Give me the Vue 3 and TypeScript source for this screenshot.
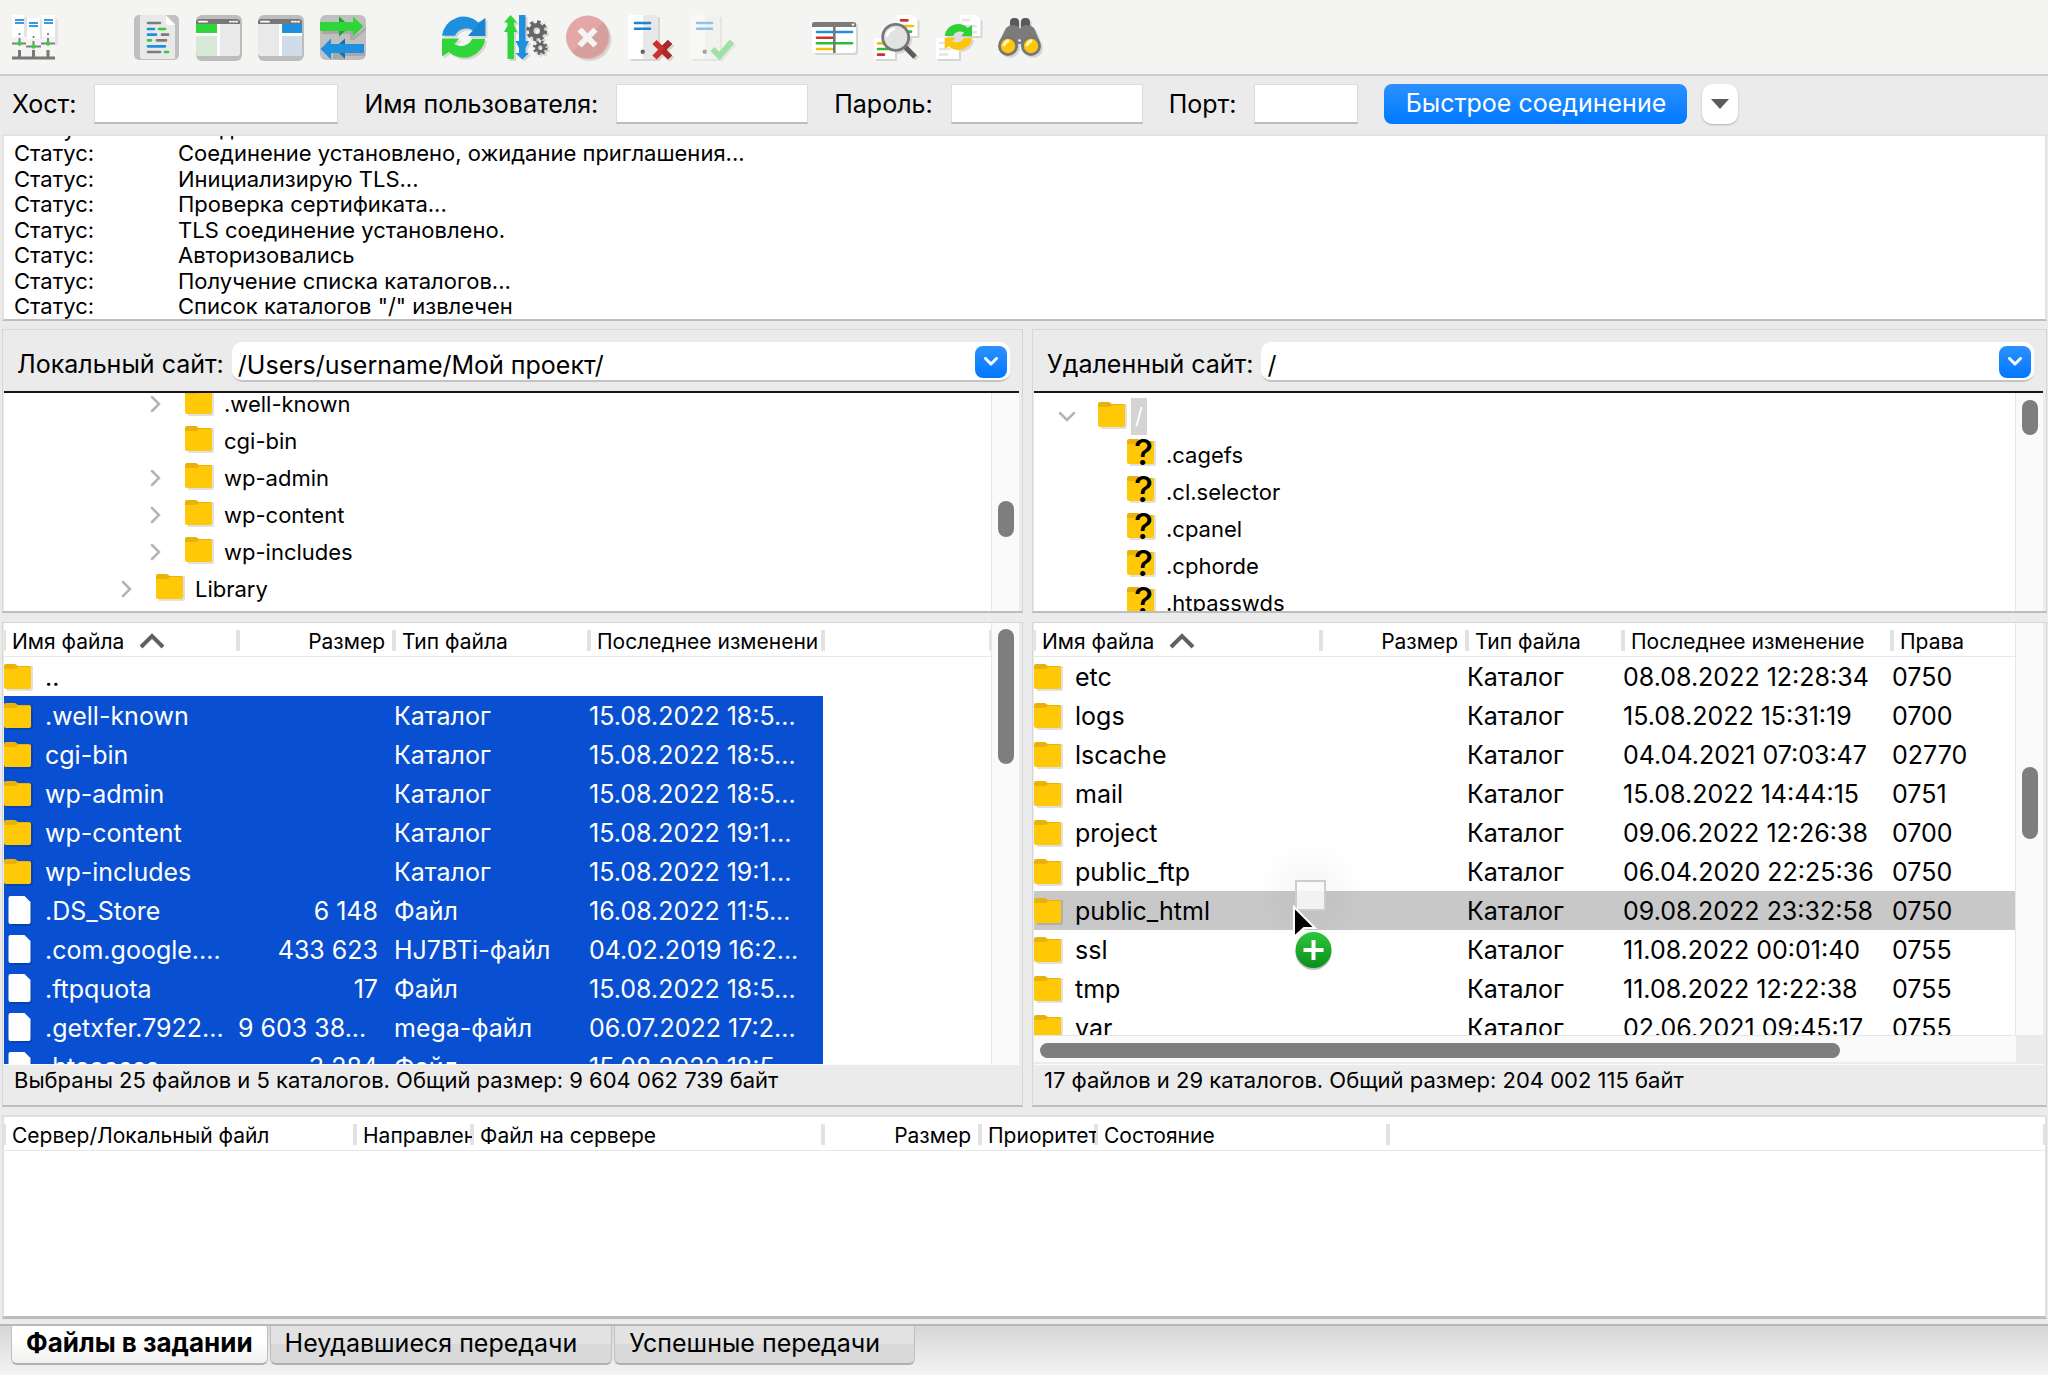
<script setup lang="ts">
interface FileRow {
  icon: 'folder' | 'file'
  name: string
  size: string
  type: string
  date: string
  rights?: string
  elided?: boolean
  state?: 'selected' | 'target'
}

interface TreeRow {
  name: string
  level: number
  arrow: 'right' | 'down' | 'none'
  unknown?: boolean
  current?: boolean
}

const log: string[] = [
  'Соединяюсь с 185.104.45.120:21...',
  'Соединение установлено, ожидание приглашения...',
  'Инициализирую TLS...',
  'Проверка сертификата...',
  'TLS соединение установлено.',
  'Авторизовались',
  'Получение списка каталогов...',
  'Список каталогов "/" извлечен',
]

const localTree: TreeRow[] = [
  { name: '.well-known', level: 2, arrow: 'right' },
  { name: 'cgi-bin', level: 2, arrow: 'none' },
  { name: 'wp-admin', level: 2, arrow: 'right' },
  { name: 'wp-content', level: 2, arrow: 'right' },
  { name: 'wp-includes', level: 2, arrow: 'right' },
  { name: 'Library', level: 1, arrow: 'right' },
]

const remoteTree: TreeRow[] = [
  { name: '/', level: 0, arrow: 'down', current: true },
  { name: '.cagefs', level: 1, arrow: 'none', unknown: true },
  { name: '.cl.selector', level: 1, arrow: 'none', unknown: true },
  { name: '.cpanel', level: 1, arrow: 'none', unknown: true },
  { name: '.cphorde', level: 1, arrow: 'none', unknown: true },
  { name: '.htpasswds', level: 1, arrow: 'none', unknown: true },
]

const localFiles: FileRow[] = [
  { icon: 'folder', name: '..', size: '', type: '', date: '' },
  { icon: 'folder', name: '.well-known', size: '', type: 'Каталог', date: '15.08.2022 18:5...', state: 'selected' },
  { icon: 'folder', name: 'cgi-bin', size: '', type: 'Каталог', date: '15.08.2022 18:5...', state: 'selected' },
  { icon: 'folder', name: 'wp-admin', size: '', type: 'Каталог', date: '15.08.2022 18:5...', state: 'selected' },
  { icon: 'folder', name: 'wp-content', size: '', type: 'Каталог', date: '15.08.2022 19:1...', state: 'selected' },
  { icon: 'folder', name: 'wp-includes', size: '', type: 'Каталог', date: '15.08.2022 19:1...', state: 'selected' },
  { icon: 'file', name: '.DS_Store', size: '6 148', type: 'Файл', date: '16.08.2022 11:5...', state: 'selected' },
  { icon: 'file', name: '.com.google....', size: '433 623', type: 'HJ7BTi-файл', date: '04.02.2019 16:2...', state: 'selected' },
  { icon: 'file', name: '.ftpquota', size: '17', type: 'Файл', date: '15.08.2022 18:5...', state: 'selected' },
  { icon: 'file', name: '.getxfer.7922...', size: '9 603 38...', elided: true, type: 'mega-файл', date: '06.07.2022 17:2...', state: 'selected' },
  { icon: 'file', name: '.htaccess', size: '3 284', type: 'Файл', date: '15.08.2022 18:5...', state: 'selected' },
]

const remoteFiles: FileRow[] = [
  { icon: 'folder', name: 'etc', size: '', type: 'Каталог', date: '08.08.2022 12:28:34', rights: '0750' },
  { icon: 'folder', name: 'logs', size: '', type: 'Каталог', date: '15.08.2022 15:31:19', rights: '0700' },
  { icon: 'folder', name: 'lscache', size: '', type: 'Каталог', date: '04.04.2021 07:03:47', rights: '02770' },
  { icon: 'folder', name: 'mail', size: '', type: 'Каталог', date: '15.08.2022 14:44:15', rights: '0751' },
  { icon: 'folder', name: 'project', size: '', type: 'Каталог', date: '09.06.2022 12:26:38', rights: '0700' },
  { icon: 'folder', name: 'public_ftp', size: '', type: 'Каталог', date: '06.04.2020 22:25:36', rights: '0750' },
  { icon: 'folder', name: 'public_html', size: '', type: 'Каталог', date: '09.08.2022 23:32:58', rights: '0750', state: 'target' },
  { icon: 'folder', name: 'ssl', size: '', type: 'Каталог', date: '11.08.2022 00:01:40', rights: '0755' },
  { icon: 'folder', name: 'tmp', size: '', type: 'Каталог', date: '11.08.2022 12:22:38', rights: '0755' },
  { icon: 'folder', name: 'var', size: '', type: 'Каталог', date: '02.06.2021 09:45:17', rights: '0755' },
]

// Scrollbar geometry: space before the thumb, thumb length, space after it.
type Span = [number, number, number]
const rows = (s: Span) => ({ gridTemplateRows: s.map((n) => `${n}fr`).join(' ') })
const cols = (s: Span) => ({ gridTemplateColumns: s.map((n) => `${n}fr`).join(' ') })
</script>

<template>
  <div class="app">
    <svg class="defs" aria-hidden="true">
      <symbol id="folder" viewBox="0 0 29 28">
        <path d="M2 3h26a1 1 0 0 1 1 1v22a2 2 0 0 1-2 2H3z" fill="#000" opacity=".12" />
        <path d="M0 3a2 2 0 0 1 2-2h9l3 2h11a2 2 0 0 1 2 2v4H0z" fill="#e9b20b" />
        <path d="M0 6h11q2 0 3-2h11a2 2 0 0 1 2 1v19a2 2 0 0 1-2 2H2a2 2 0 0 1-2-2z" fill="#ffc907" />
      </symbol>
      <symbol id="file" viewBox="0 0 28 30">
        <path d="M6 1h15l6 7v21a1 1 0 0 1-1 1H6z" fill="#000" opacity=".15" />
        <path d="M6 0h14l6 6v20a2 2 0 0 1-2 2H6a2 2 0 0 1-2-2V2a2 2 0 0 1 2-2z" fill="#fff" />
      </symbol>
      <symbol id="arcs" viewBox="0 0 48 48">
        <path d="M0 20.700A21.800 21.800 0 0 1 36.500 7.500L43.300 3v18H26l5-5.600A12.500 12.500 0 0 0 13 20.700z" />
      </symbol>
    </svg>

    <header class="toolbar">
      <div class="tools">
        <button class="tool" aria-label="Менеджер сайтов">
          <svg viewBox="0 0 48 48">
            <g fill="#fff"><path d="M0 0h12v22H0zM30 0h13v22H30zM15 3h13v21H15z" /></g>
            <path d="M12 2h3v20h-3zM28 4h2v20h-2zM43 4h3v26h-3z" fill="#e4e4e4" />
            <g stroke="#3a9ade" stroke-width="2"><path d="M3 5h9M3 8h9M17 8h9M17 11h9M32 5h9M32 8h9" /></g>
            <g fill="#666"><circle cx="7.500" cy="19" r="1" /><circle cx="21.500" cy="22" r="1" /><circle cx="36" cy="19" r="1" /></g>
            <g stroke="#808080" stroke-width="2"><path d="M0 28.500h14M14 31.500h15M29 28.500h14M7.500 23v6M21.500 26v6M36 23v6" /></g>
            <g stroke="#777" stroke-width="3"><path d="M0 43h43M7.500 35v7M21.500 35v7M36 35v7" /></g>
            <g fill="#30d53a"><circle cx="7.500" cy="28.500" r="2.200" /><circle cx="21.500" cy="31.500" r="2.200" /><circle cx="36" cy="28.500" r="2.200" /></g>
          </svg>
        </button>
      </div>
      <div class="tools">
        <button class="tool" aria-label="Журнал сообщений">
          <svg viewBox="0 0 48 48">
            <rect width="45" height="45" rx="5" fill="#c0c0c0" />
            <path d="M8 0h24l9 9v33a2 2 0 0 1-2 2H8a2 2 0 0 1-2-2V2a2 2 0 0 1 2-2z" fill="#e9e9e9" />
            <path d="M32 1l9 9h-7a2 2 0 0 1-2-2z" fill="#fff" />
            <g stroke-width="2.700" stroke-linecap="round">
              <path d="M14 8h12M28 19.700h6M23 25.300h9M14 37h12" stroke="#7c7c7c" />
              <path d="M14 14h6M14 19.700h8M14 31.300h17" stroke="#1f90de" />
              <path d="M25 14h6M14 25.300h3M31 37h3" stroke="#2ed038" />
            </g>
          </svg>
        </button>
        <button class="tool" aria-label="Локальное дерево">
          <svg viewBox="0 0 48 48">
            <rect width="46" height="46" rx="6" fill="#bdbdbd" />
            <path d="M0 9h44v29a3 3 0 0 1-3 3H3a3 3 0 0 1-3-3z" fill="#e9e9e9" />
            <path d="M0 9V7q0-3 4-3h36q4 0 4 3v2z" fill="#777" />
            <path d="M3 6.700h8M34 6.700h1M37 6.700h1M40 6.700h1" stroke="#fff" stroke-width="1.800" stroke-linecap="round" />
            <path d="M0 9h21v9H0z" fill="#30d53a" />
            <path d="M0 21h21v20H3a3 3 0 0 1-3-3z" fill="#d6e9d6" />
            <path d="M0 18h21V9h3v32h-3V21H0z" fill="#fff" />
          </svg>
        </button>
        <button class="tool" aria-label="Удаленное дерево">
          <svg viewBox="0 0 48 48">
            <rect width="46" height="46" rx="6" fill="#bdbdbd" />
            <path d="M0 9h44v29a3 3 0 0 1-3 3H3a3 3 0 0 1-3-3z" fill="#e9e9e9" />
            <path d="M0 9V7q0-3 4-3h36q4 0 4 3v2z" fill="#777" />
            <path d="M3 6.700h8M34 6.700h1M37 6.700h1M40 6.700h1" stroke="#fff" stroke-width="1.800" stroke-linecap="round" />
            <path d="M24 9h20v9H24z" fill="#1f90de" />
            <path d="M24 21h20v17a3 3 0 0 1-3 3H24z" fill="#d0dde8" />
            <path d="M44 18H24V9h-3v32h3V21h20z" fill="#fff" />
          </svg>
        </button>
        <button class="tool" aria-label="Очередь передачи">
          <svg viewBox="0 0 48 48">
            <rect width="46" height="45" rx="6" fill="#c0c0c0" />
            <path d="M2 16h31v6l3-2 10-8 0 3-12 10H30v-6H2zM13 38h32v3H25v4l-12-1z" fill="#000" opacity=".12" />
            <path d="M0 7h19V1.500L25 7h8V1.500L43.500 11.500 33 21.500V16h-8l-6 5.500V16H0z" fill="#30d53a" />
            <path d="M19 16h6l-6 5.500zM19 7h6l-6-5.500z" fill="#22a52b" />
            <path d="M44 29H25v-5l-6 5h-8v-5.500L.5 34 11 44.500V38h8l6 5.500V38h19z" fill="#1f90de" />
            <path d="M25 29h-6l6-5.500zM25 38h-6l6 5.500z" fill="#1670b0" />
          </svg>
        </button>
      </div>
      <div class="tools">
        <button class="tool shade" aria-label="Обновить">
          <svg viewBox="0 0 48 48">
            <use href="#arcs" fill="#1f90de" width="48" height="48" />
            <path d="M26 21h17.300V3L30 16z" fill="#1878c4" opacity=".5" />
            <g transform="rotate(180 21.650 22.200)"><use href="#arcs" fill="#30d53a" width="48" height="48" /></g>
          </svg>
        </button>
        <button class="tool shade" aria-label="Обработка очереди">
          <svg viewBox="0 0 48 48">
            <path d="M6.500 0L13 7.500H10v3l3 6.500h-3v27H3.500V17H0l3.500-6.500v-3H0z" fill="#30d53a" />
            <path d="M15 0h6.500v26H25l-3.500 7v5H25l-6.800 6.500L11.500 38H15v-5l-3.500-7H15z" fill="#1f90de" />
            <circle cx="32.700" cy="15.700" r="5.500" fill="none" stroke="#666" stroke-width="4.600" />
            <circle cx="32.700" cy="15.700" r="8.700" fill="none" stroke="#666" stroke-width="3.600" stroke-dasharray="3.420 3.413" />
            <circle cx="36.300" cy="32.700" r="3.700" fill="none" stroke="#666" stroke-width="3" />
            <circle cx="36.300" cy="32.700" r="5.800" fill="none" stroke="#666" stroke-width="3" stroke-dasharray="2.280 2.275" />
          </svg>
        </button>
        <button class="tool shade" aria-label="Отменить">
          <svg viewBox="0 0 48 48">
            <circle cx="21.700" cy="22.300" r="21.700" fill="#e4a7a6" />
            <path d="M37 7A21.700 21.700 0 0 1 6.400 37.600z" fill="#d3a09e" />
            <path d="M13.500 14.500l16 16M29.500 14.500l-16 16" stroke="#f6f3f3" stroke-width="6" />
          </svg>
        </button>
        <button class="tool shade" aria-label="Отключиться">
          <svg viewBox="0 0 48 48">
            <path d="M2 0h28v44H2a2 2 0 0 1-2-2V2a2 2 0 0 1 2-2z" fill="#fff" />
            <path d="M15 0h13a2 2 0 0 1 2 2v42H15z" fill="#e8e8e8" />
            <path d="M7 8h15M7 13.700h15" stroke="#1f84d0" stroke-width="2.600" stroke-linecap="round" />
            <circle cx="14.700" cy="36.700" r="2.200" fill="#666" />
            <path d="M26.500 27l15.500 15.500M42 27L26.500 42.500" stroke="#cf2e2e" stroke-width="6" />
            <path d="M36.300 32.700L42 27M34.300 34.800L42 42.500" stroke="#a92a2a" stroke-width="6" />
          </svg>
        </button>
        <button class="tool shade faded" aria-label="Переподключиться">
          <svg viewBox="0 0 48 48">
            <path d="M2 0h28v44H2a2 2 0 0 1-2-2V2a2 2 0 0 1 2-2z" fill="#fff" />
            <path d="M15 0h13a2 2 0 0 1 2 2v42H15z" fill="#efefef" />
            <path d="M7 8h15M7 13.700h15" stroke="#1f84d0" stroke-width="2.600" stroke-linecap="round" />
            <circle cx="14.700" cy="36.700" r="2.200" fill="#444" />
            <path d="M22.500 34l7 7L42 26.500" fill="none" stroke="#3fce46" stroke-width="6" />
          </svg>
        </button>
      </div>
      <div class="tools">
        <button class="tool shade" aria-label="Фильтр">
          <svg viewBox="0 0 48 48">
            <rect y="7" width="44" height="31" rx="3" fill="#fff" />
            <path d="M0 12V9q0-2 3-2h38q3 0 3 2v3z" fill="#7b7b7b" />
            <circle cx="41" cy="9.600" r="1.200" fill="#fff" />
            <g stroke-width="2.600" stroke-linecap="round">
              <path d="M5 17h35" stroke="#1f90de" /><path d="M5 22.700h17" stroke="#d23030" />
              <path d="M5 28.300h35" stroke="#27c030" /><path d="M5 34h17" stroke="#f5bf10" />
            </g>
            <path d="M22.300 12v26" stroke="#777" stroke-width="2.600" />
          </svg>
        </button>
        <button class="tool shade" aria-label="Сравнение каталогов">
          <svg viewBox="0 0 48 48">
            <path d="M23 0h16l4.500 4v17H23zM0 23h21v21H0z" fill="#fff" />
            <g stroke-width="2.700" stroke-linecap="round">
              <path d="M27 5.300h6.500M4 39.700h6" stroke="#d23030" />
              <path d="M27 11h12M4 28.300h8" stroke="#f5bf10" />
              <path d="M33 16.700h4M4 34h12" stroke="#27c030" />
            </g>
            <path d="M31 31.700L41 42" stroke="#5c5c5c" stroke-width="5" />
            <circle cx="21.700" cy="22.300" r="13" fill="#e2e2e2" stroke="#777" stroke-width="2.800" />
            <path d="M13 21a9 9 0 0 1 7-7" fill="none" stroke="#fff" stroke-width="2.500" stroke-linecap="round" />
          </svg>
        </button>
        <button class="tool shade" aria-label="Синхронный обзор">
          <svg viewBox="0 0 48 48">
            <path d="M24 0h16l4.500 4v17H24zM0 23h23v21H0z" fill="#fff" />
            <path d="M27 5h6M27 11h13M34 17h6M4 28h6M4 34h10M4 39.500h7" stroke="#e4e4e4" stroke-width="2.500" stroke-linecap="round" />
            <g transform="translate(8.700 8) scale(.63)">
              <circle cx="21.700" cy="22.200" r="14" fill="#ddd" />
              <use href="#arcs" fill="#2ed038" width="48" height="48" />
              <g transform="rotate(180 21.650 22.200)"><use href="#arcs" fill="#fcc40c" width="48" height="48" /></g>
            </g>
          </svg>
        </button>
        <button class="tool shade" aria-label="Поиск">
          <svg viewBox="0 0 48 48">
            <rect x="12" y="3" width="9" height="14" rx="4" fill="#595959" />
            <rect x="23" y="3" width="9" height="14" rx="4" fill="#595959" />
            <path d="M8 13q3-3 7-3 5 0 7 4 2-4 7-4 4 0 7 3l6 14v6H25v-4h-5v4H1v-6z" fill="#7b7b7b" />
            <circle cx="10" cy="31" r="8.600" fill="#ffc709" stroke="#777" stroke-width="2.800" />
            <circle cx="33" cy="31" r="8.600" fill="#ffc709" stroke="#777" stroke-width="2.800" />
            <path d="M6 30q1-3 4-4M29 30q1-3 4-4" fill="none" stroke="#fff3c4" stroke-width="3" stroke-linecap="round" />
            <circle cx="21.500" cy="25.500" r="1.300" fill="#fff" />
          </svg>
        </button>
      </div>
    </header>

    <form class="quick" @submit.prevent>
      <div class="field"><label for="host">Хост:</label><input id="host" class="host" type="text" /></div>
      <div class="field"><label for="user">Имя пользователя:</label><input id="user" class="cred" type="text" /></div>
      <div class="field"><label for="pass">Пароль:</label><input id="pass" class="cred" type="password" /></div>
      <div class="field"><label for="port">Порт:</label><input id="port" class="port" type="text" /></div>
      <button class="connect" type="submit">Быстрое соединение</button>
      <button class="history" type="button" aria-label="История соединений">
        <svg viewBox="0 0 18 10" width="18" height="10"><path d="M0 0h18L9 10z" fill="#5c5c5c" /></svg>
      </button>
    </form>

    <section class="log">
      <div class="entries">
        <div v-for="(line, i) in log" :key="i" class="entry"><span class="kind">Статус:</span><span>{{ line }}</span></div>
      </div>
    </section>

    <section class="split trees">
      <div class="panel">
        <div class="path">
          <label for="local">Локальный сайт:</label>
          <div class="combo">
            <input id="local" type="text" value="/Users/username/Мой проект/" />
            <button type="button" aria-label="Выбрать локальный каталог">
              <svg viewBox="0 0 14 9" width="14" height="9"><path d="M1.500 1.500L7 7l5.500-5.500" fill="none" stroke="#fff" stroke-width="3" stroke-linecap="round" stroke-linejoin="round" /></svg>
            </button>
          </div>
        </div>
        <div class="viewport framed">
          <ul class="tree local">
            <li v-for="row in localTree" :key="row.name" :class="`level${row.level}`">
              <span class="twist">
                <svg v-if="row.arrow === 'right'" viewBox="0 0 12 18" width="12" height="18"><path d="M2 2l7 7-7 7" fill="none" stroke="#b4b4b4" stroke-width="2.500" stroke-linecap="round" /></svg>
              </span>
              <svg class="ico" width="29" height="28"><use href="#folder" /></svg>
              <span class="label">{{ row.name }}</span>
            </li>
          </ul>
          <div class="vbar" :style="rows([108, 35, 74])"><i></i></div>
        </div>
      </div>
      <div class="panel">
        <div class="path">
          <label for="remote">Удаленный сайт:</label>
          <div class="combo">
            <input id="remote" type="text" value="/" />
            <button type="button" aria-label="Выбрать удаленный каталог">
              <svg viewBox="0 0 14 9" width="14" height="9"><path d="M1.500 1.500L7 7l5.500-5.500" fill="none" stroke="#fff" stroke-width="3" stroke-linecap="round" stroke-linejoin="round" /></svg>
            </button>
          </div>
        </div>
        <div class="viewport framed">
          <ul class="tree remote">
            <li v-for="row in remoteTree" :key="row.name" :class="`level${row.level}`">
              <span class="twist">
                <svg v-if="row.arrow === 'down'" viewBox="0 0 18 12" width="18" height="12"><path d="M2 2l7 7 7-7" fill="none" stroke="#b4b4b4" stroke-width="2.500" stroke-linecap="round" /></svg>
              </span>
              <svg class="ico" width="29" height="30" viewBox="0 0 29 30">
                <use href="#folder" width="29" height="28" y="1" />
                <text v-if="row.unknown" class="mark" x="7" y="28">?</text>
              </svg>
              <span class="label" :class="{ current: row.current }">{{ row.name }}</span>
            </li>
          </ul>
          <div class="vbar" :style="rows([7, 35, 175])"><i></i></div>
        </div>
      </div>
    </section>

    <section class="split lists">
      <div class="panel">
        <div class="viewport">
          <div class="clip">
            <table>
              <colgroup><col class="l1" /><col class="l2" /><col class="l3" /><col class="l4" /><col /></colgroup>
              <thead>
                <tr>
                  <th>Имя файла<svg class="sort" viewBox="0 0 26 16" width="26" height="16"><path d="M2 14L13 3l11 11" fill="none" stroke="#606060" stroke-width="4" /></svg></th>
                  <th class="num">Размер</th><th>Тип файла</th><th>Последнее изменени</th><th></th>
                </tr>
              </thead>
              <tbody>
                <tr v-for="f in localFiles" :key="f.name" :class="f.state">
                  <td><div class="name"><svg width="29" height="30"><use :href="`#${f.icon}`" /></svg><span>{{ f.name }}</span></div></td>
                  <td :class="f.elided ? '' : 'num'">{{ f.size }}</td><td>{{ f.type }}</td><td>{{ f.date }}</td><td class="rest"></td>
                </tr>
              </tbody>
            </table>
          </div>
          <div class="vbar" :style="rows([6, 135, 300])"><i></i></div>
        </div>
        <div class="status">Выбраны 25 файлов и 5 каталогов. Общий размер: 9 604 062 739 байт</div>
      </div>
      <div class="panel">
        <div class="viewport">
          <div class="clip">
            <table>
              <colgroup><col class="r1" /><col class="r2" /><col class="r3" /><col class="r4" /><col /></colgroup>
              <thead>
                <tr>
                  <th>Имя файла<svg class="sort" viewBox="0 0 26 16" width="26" height="16"><path d="M2 14L13 3l11 11" fill="none" stroke="#606060" stroke-width="4" /></svg></th>
                  <th class="num">Размер</th><th>Тип файла</th><th>Последнее изменение</th><th class="open">Права</th>
                </tr>
              </thead>
              <tbody>
                <tr v-for="f in remoteFiles" :key="f.name" :class="f.state">
                  <td><div class="name"><svg width="29" height="30"><use :href="`#${f.icon}`" /></svg><span>{{ f.name }}</span></div></td>
                  <td class="num">{{ f.size }}</td><td>{{ f.type }}</td><td>{{ f.date }}</td><td>{{ f.rights }}</td>
                </tr>
              </tbody>
            </table>
          </div>
          <div class="vbar" :style="rows([144, 73, 196])"><i></i></div>
        </div>
        <div class="hrow"><div class="hbar" :style="cols([6, 800, 176])"><i></i></div></div>
        <div class="status">17 файлов и 29 каталогов. Общий размер: 204 002 115 байт</div>
        <svg class="drag" viewBox="0 0 120 130" width="120" height="130" aria-hidden="true">
          <defs>
            <radialGradient id="halo"><stop offset=".3" stop-color="#000" stop-opacity=".03" /><stop offset="1" stop-color="#000" stop-opacity="0" /></radialGradient>
            <linearGradient id="add" x2="0" y2="1"><stop stop-color="#2fc63c" /><stop offset="1" stop-color="#0a8f1b" /></linearGradient>
          </defs>
          <circle cx="60" cy="55" r="55" fill="url(#halo)" />
          <rect x="46" y="41" width="29" height="29" fill="#fafafa" fill-opacity=".85" stroke="#cdcdcd" stroke-width="2" />
          <path d="M44 67l21 21H54l-10 9z" fill="#000" stroke="#fff" stroke-width="2" />
          <circle cx="63.500" cy="112" r="18" fill="#000" opacity=".25" />
          <circle cx="63.500" cy="110" r="18" fill="url(#add)" />
          <path d="M63.500 100v20M53.500 110h20" stroke="#fff" stroke-width="4" />
        </svg>
      </div>
    </section>

    <section class="queue">
      <table>
        <colgroup><col class="q1" /><col class="q2" /><col class="q3" /><col class="q4" /><col class="q5" /><col class="q6" /><col /></colgroup>
        <thead>
          <tr><th>Сервер/Локальный файл</th><th>Направление</th><th>Файл на сервере</th><th class="num">Размер</th><th>Приоритет</th><th>Состояние</th><th></th></tr>
        </thead>
      </table>
    </section>

    <nav class="tabs">
      <button class="tab active">Файлы в задании</button>
      <button class="tab">Неудавшиеся передачи</button>
      <button class="tab">Успешные передачи</button>
    </nav>
  </div>
</template>

<style>
body {
  background: #ebebeb;
}
</style>

<style scoped>
.app {
  display: flex;
  flex-direction: column;
  height: 100vh;
  overflow: hidden;
  background: #ebebeb;
  color: #000;
  font-family: Inter, "Noto Sans", sans-serif;
  font-size: 25px;
}
.app * {
  box-sizing: border-box;
}
.defs {
  position: absolute;
  width: 0;
  height: 0;
}
button,
input {
  font: inherit;
  color: inherit;
  border: 0;
  padding: 0;
  margin: 0;
}

/* toolbar */
.toolbar {
  flex: none;
  display: flex;
  gap: 74px;
  height: 76px;
  padding: 15px 12px 0;
  background: #f4f4f2;
  border-bottom: 2px solid #cbcbcb;
}
.tools {
  display: flex;
  gap: 14px;
}
.tool {
  width: 48px;
  height: 48px;
  background: none;
}
.tool svg {
  display: block;
  width: 48px;
  height: 48px;
}
.shade svg {
  filter: drop-shadow(2px 2px 0 rgba(0, 0, 0, 0.12));
}
.faded {
  opacity: 0.45;
}

/* quick connect */
.quick {
  flex: none;
  display: flex;
  align-items: center;
  height: 58px;
  padding: 0 12px 2px;
}
.field {
  display: flex;
  align-items: center;
  gap: 18px;
  margin-right: 26px;
}
.field input {
  height: 40px;
  background: #fff;
  border: 1px solid #dcdcdc;
  border-bottom: 2px solid #bcbcbc;
}
.field .host {
  width: 244px;
}
.field .cred {
  width: 192px;
}
.field .port {
  width: 104px;
}
.connect {
  height: 40px;
  width: 303px;
  padding-bottom: 2px;
  border-radius: 8px;
  color: #fff;
  background: linear-gradient(#2b91ff, #0078ff);
}
.history {
  display: grid;
  place-items: center;
  width: 36px;
  height: 40px;
  margin-left: 15px;
  border-radius: 10px;
  background: #fff;
  box-shadow: 0 1px 2px rgba(0, 0, 0, 0.25);
}

/* message log, scrolled to its last line */
.log {
  flex: 187 1 187px;
  min-height: 0;
  display: flex;
  flex-direction: column;
  justify-content: flex-end;
  overflow: hidden;
  margin: 0 1px 0 2px;
  background: #fff;
  border: 2px solid #e2e2e2;
  border-bottom-color: #bdbdbd;
  font-size: 22px;
}
.entries {
  flex: none;
  display: flex;
  flex-direction: column;
  justify-content: space-between;
  height: 203px;
}
.entry {
  display: flex;
  line-height: 25px;
  padding-left: 10px;
  white-space: nowrap;
}
.kind {
  width: 164px;
}

/* split panes */
.split {
  display: grid;
  grid-template-columns: minmax(0, 1021fr) minmax(0, 1015fr);
  gap: 9px;
  margin: 8px 1px 0 2px;
  min-height: 0;
}
.trees {
  flex: 284 1 284px;
}
.lists {
  flex: 485 1 485px;
  margin-top: 9px;
}
.panel {
  position: relative;
  display: flex;
  flex-direction: column;
  min-height: 0;
  padding: 0 3px 0 1px;
  border: 1px solid #d6d6d6;
  border-bottom: 2px solid #bdbdbd;
}
.path {
  flex: none;
  display: flex;
  align-items: center;
  gap: 8px;
  height: 61px;
  padding: 2px 9px 0 13px;
}
.path label {
  padding-top: 4px;
}
.combo {
  flex: 1;
  display: flex;
  align-items: center;
  height: 40px;
  padding: 2px 3px 0 6px;
  background: #fff;
  border-radius: 10px;
  border-bottom: 2px solid #c4c4c4;
}
.combo input {
  flex: 1;
  min-width: 0;
  padding-top: 6px;
  background: none;
}
.combo button {
  display: grid;
  place-items: center;
  width: 32px;
  height: 32px;
  border-radius: 8px;
  background: linear-gradient(#2b91ff, #0078ff);
}
.viewport {
  flex: 1;
  display: flex;
  min-height: 0;
  background: #fff;
}
.framed {
  border-top: 2px solid #161616;
}
.vbar,
.hbar {
  display: grid;
  background: #fafafa;
}
.vbar {
  flex: none;
  width: 28px;
  padding: 0 5px 0 6px;
  border-left: 1px solid #e6e6e6;
}
.vbar i {
  grid-row: 2;
  border-radius: 8px;
  background: #7e7e7e;
}
.hrow {
  flex: none;
  height: 29px;
  padding: 0 27px 2px 0;
}
.hbar {
  height: 27px;
  padding: 7px 0 4px;
  border-top: 1px solid #e6e6e6;
}
.hbar i {
  grid-column: 2;
  border-radius: 8px;
  background: #7e7e7e;
}

/* directory trees */
.tree {
  flex: 1;
  display: flex;
  flex-direction: column;
  min-width: 0;
  margin: 0;
  padding: 0;
  overflow: hidden;
  list-style: none;
  font-size: 22px;
}
.tree.local {
  justify-content: flex-end;
  padding-bottom: 4px;
}
.tree.remote {
  padding-top: 5px;
}
.tree li {
  flex: none;
  display: flex;
  align-items: center;
  height: 37px;
}
.twist {
  flex: none;
  display: flex;
  width: 40px;
}
.ico {
  flex: none;
  margin-bottom: 4px;
  overflow: visible;
}
.label {
  margin-left: 10px;
  padding-top: 2px;
  line-height: 35px;
}
.remote .label {
  padding-top: 4px;
}
.remote .label.current {
  margin-left: 4px;
  padding: 1px 4px;
  color: #fff;
  background: #d4d4d4;
}
.local .level1 {
  padding-left: 112px;
}
.local .level2 {
  padding-left: 141px;
}
.local .twist {
  padding-left: 5px;
}
.remote .level0 {
  padding-left: 24px;
}
.remote .level1 {
  padding-left: 53px;
}
.mark {
  font-size: 36px;
  font-weight: 500;
}

/* tables */
.clip {
  flex: 1;
  min-width: 0;
  overflow: hidden;
}
table {
  width: 100%;
  table-layout: fixed;
  border-collapse: separate;
  border-spacing: 0;
}
.l1 { width: 234px; }
.l2 { width: 156px; }
.l3 { width: 195px; }
.l4 { width: 234px; }
.r1 { width: 287px; }
.r2 { width: 146px; }
.r3 { width: 156px; }
.r4 { width: 269px; }
.q1 { width: 351px; }
.q2 { width: 117px; }
.q3 { width: 351px; }
.q4 { width: 157px; }
.q5 { width: 116px; }
.q6 { width: 292px; }
th {
  height: 34px;
  padding: 4px 0 0 8px;
  overflow: hidden;
  font-size: 21px;
  font-weight: 400;
  line-height: 29px;
  text-align: left;
  white-space: nowrap;
  border-bottom: 1px solid #e8e8e8;
  background:
    linear-gradient(#e2e2e2, #e2e2e2) left 7px / 2px 21px no-repeat,
    linear-gradient(#e2e2e2, #e2e2e2) right 7px / 2px 21px no-repeat;
}
th.open {
  background: linear-gradient(#e2e2e2, #e2e2e2) left 7px / 2px 21px no-repeat;
}
th.num {
  padding-right: 9px;
  text-align: right;
}
.sort {
  margin-left: 15px;
}
td {
  height: 39px;
  padding: 2px 0 0;
  line-height: 37px;
  white-space: nowrap;
}
td.num {
  padding-right: 16px;
  text-align: right;
}
.name {
  display: flex;
  align-items: center;
  gap: 12px;
  height: 37px;
}
.name svg {
  margin-bottom: 2px;
}
.selected td {
  color: #fff;
  background: #094fd1;
}
.selected td.rest {
  background: none;
}
.target td {
  background: #c8c8c8;
}
.status {
  flex: none;
  height: 41px;
  padding-left: 10px;
  font-size: 22px;
  line-height: 31px;
  border-top: 1px solid #fafafa;
  white-space: nowrap;
}
.drag {
  position: absolute;
  left: 217px;
  top: 217px;
}

/* transfer queue */
.queue {
  flex: 204 1 204px;
  min-height: 0;
  margin: 8px 1px 0 2px;
  background: #fff;
  border: 2px solid #e0e0e0;
  border-bottom: 3px solid #bdbdbd;
}
.tabs {
  flex: none;
  display: flex;
  gap: 2px;
  align-items: flex-start;
  height: 51px;
  margin-top: 5px;
  padding: 0 11px;
  border-top: 2px solid #b8b8b8;
  background: linear-gradient(#d6d6d6, #f4f4f4);
}
.tab {
  height: 39px;
  padding: 0 34px 4px 14px;
  line-height: 34px;
  white-space: nowrap;
  background: linear-gradient(#e2e2e2 50%, #d9d9d9 50%);
  border: 1px solid #c0c0c0;
  border-top: 0;
  border-bottom: 2px solid #b0b0b0;
  border-radius: 0 0 6px 6px;
}
.tab.active {
  padding: 0 14px 4px;
  font-size: 26px;
  font-weight: 700;
  background: linear-gradient(#fff 40%, #f0f0f0);
}
</style>
